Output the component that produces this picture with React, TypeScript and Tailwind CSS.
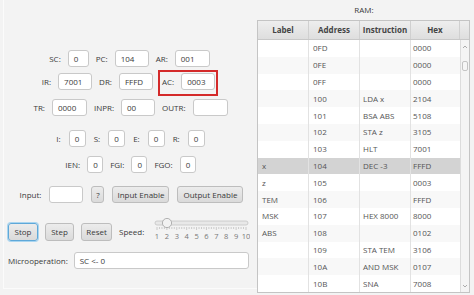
import React from "react"

const font = { fontFamily: '"Open Sans", "Liberation Sans", sans-serif' }

function Field({ w, value = "", className = "" }: { w: string; value?: string; className?: string }) {
  return (
    <div
      className={`h-[17px] ${w} bg-white border border-[#c9c9c9] rounded-[3px] flex items-center px-[5px] text-[8px] text-[#3a3a3a] ${className}`}
    >
      {value}
    </div>
  )
}

function Label({ children }: { children: React.ReactNode }) {
  return <span className="text-[8px] text-[#3a3a3a] whitespace-nowrap">{children}</span>
}

function Btn({ children, w, h = "h-[17px]", focus = false }: { children: React.ReactNode; w: string; h?: string; focus?: boolean }) {
  return (
    <div
      className={`${w} ${h} flex items-center justify-center rounded-[3px] text-[8px] text-[#3a3a3a] whitespace-nowrap bg-gradient-to-b from-[#ececec] to-[#dadada] border ${
        focus ? "border-[#5fa8d8] shadow-[0_0_0_1px_#a9d5f0]" : "border-[#bdbdbd]"
      }`}
    >
      {children}
    </div>
  )
}

function Slider() {
  const x0 = 3
  const x1 = 92
  const step = (x1 - x0) / 9
  return (
    <svg width="96" height="28" viewBox="0 0 96 28">
      <rect x="1" y="3" width="93" height="4" rx="2" fill="#e8e8e8" stroke="#c4c4c4" strokeWidth="0.8" />
      {Array.from({ length: 37 }).map((_, i) => {
        const x = x0 + (i * (x1 - x0)) / 36
        const major = i % 4 === 0
        return <line key={i} x1={x} x2={x} y1={9} y2={major ? 12 : 11} stroke="#b0b0b0" strokeWidth="0.6" />
      })}
      {Array.from({ length: 10 }).map((_, i) => (
        <text key={i} x={x0 + i * step} y="21" fontSize="7.5" fill="#777" textAnchor="middle" style={font}>
          {i + 1}
        </text>
      ))}
      <circle cx="13" cy="5" r="4.6" fill="#f2f2f2" stroke="#a9a9a9" strokeWidth="0.9" />
    </svg>
  )
}

const rows = [
  ["", "0FD", "", "0000"],
  ["", "0FE", "", "0000"],
  ["", "0FF", "", "0000"],
  ["", "100", "LDA x", "2104"],
  ["", "101", "BSA ABS", "5108"],
  ["", "102", "STA z", "3105"],
  ["", "103", "HLT", "7001"],
  ["x", "104", "DEC -3", "FFFD"],
  ["z", "105", "", "0003"],
  ["TEM", "106", "", "FFFD"],
  ["MSK", "107", "HEX 8000", "8000"],
  ["ABS", "108", "", "0102"],
  ["", "109", "STA TEM", "3106"],
  ["", "10A", "AND MSK", "0107"],
  ["", "10B", "SNA", "7008"],
]

export default function App() {
  return (
    <div className="w-[474px] h-[295px] bg-[#f3f3f3] flex overflow-hidden" style={font}>
      {/* left: registers and controls */}
      <div className="w-[254px] h-[289px] ml-[3px] border-l border-b border-[#fbfbfb] flex flex-col">
        <div className="mt-[50px] flex items-center justify-center gap-[7px] pr-[2px]">
          <Label>SC:</Label>
          <Field w="w-[21px]" value="0" />
          <Label>PC:</Label>
          <Field w="w-[34px]" value="104" />
          <Label>AR:</Label>
          <Field w="w-[35px]" value="001" />
        </div>
        <div className="mt-[6px] flex items-center justify-center gap-[7px] pr-[4px]">
          <Label>IR:</Label>
          <Field w="w-[34px]" value="7001" />
          <Label>DR:</Label>
          <Field w="w-[34px]" value="FFFD" />
          <div className="relative flex items-center gap-[7px] ml-[2px]">
            <Label>AC:</Label>
            <Field w="w-[34px]" value="0003" />
            <div className="absolute -left-[4px] -right-[3px] -top-[3px] -bottom-[6px] border-2 border-[#d42a2a]" />
          </div>
        </div>
        <div className="mt-[9px] flex items-center justify-center gap-[7px]">
          <Label>TR:</Label>
          <Field w="w-[35px]" value="0000" />
          <Label>INPR:</Label>
          <Field w="w-[34px]" value="00" />
          <Label>OUTR:</Label>
          <Field w="w-[35px]" />
        </div>
        <div className="mt-[14px] flex items-center justify-center gap-[8px]">
          <Label>I:</Label>
          <Field w="w-[17px]" value="0" />
          <Label>S:</Label>
          <Field w="w-[17px]" value="0" />
          <Label>E:</Label>
          <Field w="w-[17px]" value="0" />
          <Label>R:</Label>
          <Field w="w-[17px]" value="0" />
        </div>
        <div className="mt-[9px] flex items-center justify-center gap-[7px]">
          <Label>IEN:</Label>
          <Field w="w-[16px]" value="0" />
          <Label>FGI:</Label>
          <Field w="w-[16px]" value="0" />
          <Label>FGO:</Label>
          <Field w="w-[16px]" value="0" />
        </div>
        <div className="mt-[13px] flex items-center justify-center gap-[8px] pl-[2px]">
          <Label>Input:</Label>
          <Field w="w-[34px]" />
          <Btn w="w-[13px]">?</Btn>
          <Btn w="w-[57px]">Input Enable</Btn>
          <Btn w="w-[66px]">Output Enable</Btn>
        </div>
        <div className="mt-[17px] pl-[4px] flex items-start gap-[7px]">
          <div className="flex items-center gap-[7px] pt-[3px]">
            <Btn w="w-[30px]" h="h-[18px]" focus>
              Stop
            </Btn>
            <Btn w="w-[29px]" h="h-[18px]">Step</Btn>
            <Btn w="w-[31px]" h="h-[18px]">Reset</Btn>
            <Label>Speed:</Label>
          </div>
          <div className="-mt-[2px] ml-[3px]">
            <Slider />
          </div>
        </div>
        <div className="mt-[6px] pl-[4px] flex items-center gap-[6px]">
          <Label>Microoperation:</Label>
          <Field w="w-[175px]" value="SC <- 0" />
        </div>
      </div>

      {/* right: RAM table */}
      <div className="flex-1 flex flex-col">
        <div className="h-[20px] flex items-center justify-center text-[8px] text-[#3a3a3a] pr-[3px]">RAM:</div>
        <div className="w-[213px] h-[273px] border border-[#c4c4c4] bg-white flex flex-col">
          <div className="h-[19px] flex bg-gradient-to-b from-[#eeeeee] to-[#dedede] border-b border-[#c8c8c8] text-[8px] font-bold text-[#444]">
            <div className="w-[51px] flex items-center justify-center border-r border-[#d0d0d0]">Label</div>
            <div className="w-[51px] flex items-center justify-center border-r border-[#d0d0d0]">Address</div>
            <div className="w-[51px] flex items-center justify-center border-r border-[#d0d0d0]">Instruction</div>
            <div className="w-[49px] flex items-center justify-center border-r border-[#d0d0d0]">Hex</div>
            <div className="flex-1" />
          </div>
          <div className="flex-1 flex">
            <div className="w-[202px] flex flex-col">
              {rows.map((r, i) => (
                <div
                  key={i}
                  className={`h-[16.8px] flex text-[8px] text-[#555] ${
                    r[1] === "104" ? "bg-[#d3d3d3]" : i % 2 === 0 ? "bg-white" : "bg-[#f8f8f8]"
                  }`}
                >
                  <div className="w-[51px] flex items-center px-[4px] border-r border-[#e2e2e2]">{r[0]}</div>
                  <div className="w-[51px] flex items-center px-[4px] border-r border-[#e2e2e2]">{r[1]}</div>
                  <div className="w-[51px] flex items-center px-[3px] border-r border-[#e2e2e2]">{r[2]}</div>
                  <div className="w-[49px] flex items-center px-[2px]">{r[3]}</div>
                </div>
              ))}
            </div>
            <div className="flex-1 bg-[#f4f4f4] border-l border-[#dcdcdc] flex flex-col items-center">
              <svg width="8" height="8" viewBox="0 0 8 8" className="mt-[3px]">
                <path d="M2 5 L4 3 L6 5" fill="none" stroke="#999" strokeWidth="0.8" />
              </svg>
              <div className="mt-[10px] w-[6px] h-[10px] rounded-[2px] bg-[#f6f6f6] border border-[#c4c4c4]" />
              <div className="flex-1" />
              <svg width="8" height="8" viewBox="0 0 8 8" className="mb-[2px]">
                <path d="M2 3 L4 5 L6 3" fill="none" stroke="#999" strokeWidth="0.8" />
              </svg>
            </div>
          </div>
        </div>
      </div>
    </div>
  )
}
